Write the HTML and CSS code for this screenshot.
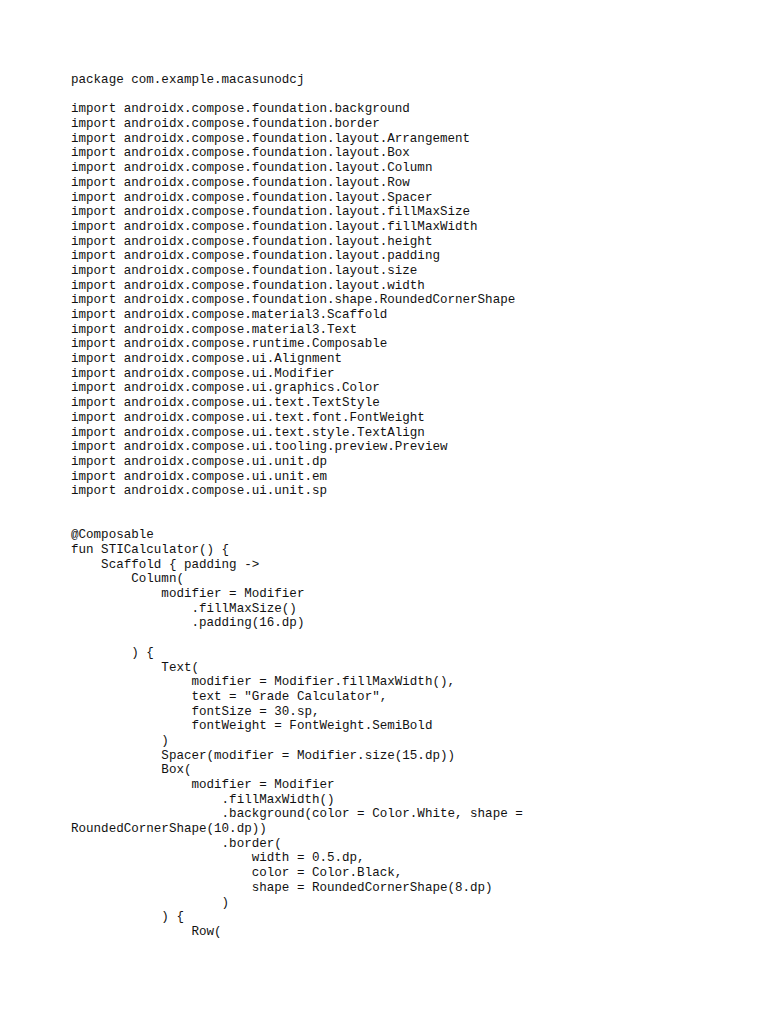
FILE: index.html
```html
<!DOCTYPE html>
<html lang="en">
<head>
<meta charset="utf-8">
<title>STICalculator</title>
<link rel="stylesheet" href="styles.css">
</head>
<body>
<main class="page">
<pre class="code">package com.example.macasunodcj

import androidx.compose.foundation.background
import androidx.compose.foundation.border
import androidx.compose.foundation.layout.Arrangement
import androidx.compose.foundation.layout.Box
import androidx.compose.foundation.layout.Column
import androidx.compose.foundation.layout.Row
import androidx.compose.foundation.layout.Spacer
import androidx.compose.foundation.layout.fillMaxSize
import androidx.compose.foundation.layout.fillMaxWidth
import androidx.compose.foundation.layout.height
import androidx.compose.foundation.layout.padding
import androidx.compose.foundation.layout.size
import androidx.compose.foundation.layout.width
import androidx.compose.foundation.shape.RoundedCornerShape
import androidx.compose.material3.Scaffold
import androidx.compose.material3.Text
import androidx.compose.runtime.Composable
import androidx.compose.ui.Alignment
import androidx.compose.ui.Modifier
import androidx.compose.ui.graphics.Color
import androidx.compose.ui.text.TextStyle
import androidx.compose.ui.text.font.FontWeight
import androidx.compose.ui.text.style.TextAlign
import androidx.compose.ui.tooling.preview.Preview
import androidx.compose.ui.unit.dp
import androidx.compose.ui.unit.em
import androidx.compose.ui.unit.sp


@Composable
fun STICalculator() {
    Scaffold { padding -&gt;
        Column(
            modifier = Modifier
                .fillMaxSize()
                .padding(16.dp)

        ) {
            Text(
                modifier = Modifier.fillMaxWidth(),
                text = "Grade Calculator",
                fontSize = 30.sp,
                fontWeight = FontWeight.SemiBold
            )
            Spacer(modifier = Modifier.size(15.dp))
            Box(
                modifier = Modifier
                    .fillMaxWidth()
                    .background(color = Color.White, shape =
RoundedCornerShape(10.dp))
                    .border(
                        width = 0.5.dp,
                        color = Color.Black,
                        shape = RoundedCornerShape(8.dp)
                    )
            ) {
                Row(</pre>
</main>
</body>
</html>
```

FILE: styles.css
```css
html, body {
  margin: 0;
  padding: 0;
  background: #ffffff;
}

.page {
  width: 768px;
  height: 1024px;
  overflow: hidden;
  box-sizing: border-box;
  padding: 73px 0 0 71px;
}

.code {
  margin: 0;
  font-family: "Liberation Mono", "DejaVu Sans Mono", monospace;
  font-size: 12.55px;
  line-height: 14.69px;
  color: #111111;
  white-space: pre;
}
```
